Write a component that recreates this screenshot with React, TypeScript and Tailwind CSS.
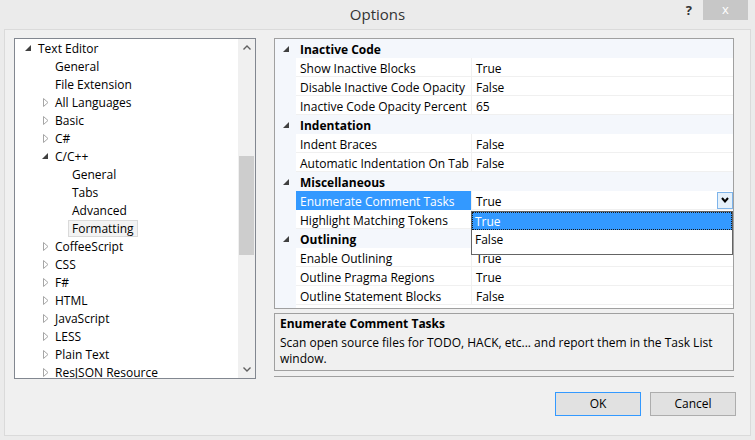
import React from 'react'

type TreeItem = {
  label: string
  level: 1 | 2 | 3
  arrow?: 'open' | 'closed'
  selected?: boolean
}

const tree: TreeItem[] = [
  { label: 'Text Editor', level: 1, arrow: 'open' },
  { label: 'General', level: 2 },
  { label: 'File Extension', level: 2 },
  { label: 'All Languages', level: 2, arrow: 'closed' },
  { label: 'Basic', level: 2, arrow: 'closed' },
  { label: 'C#', level: 2, arrow: 'closed' },
  { label: 'C/C++', level: 2, arrow: 'open' },
  { label: 'General', level: 3 },
  { label: 'Tabs', level: 3 },
  { label: 'Advanced', level: 3 },
  { label: 'Formatting', level: 3, selected: true },
  { label: 'CoffeeScript', level: 2, arrow: 'closed' },
  { label: 'CSS', level: 2, arrow: 'closed' },
  { label: 'F#', level: 2, arrow: 'closed' },
  { label: 'HTML', level: 2, arrow: 'closed' },
  { label: 'JavaScript', level: 2, arrow: 'closed' },
  { label: 'LESS', level: 2, arrow: 'closed' },
  { label: 'Plain Text', level: 2, arrow: 'closed' },
  { label: 'ResJSON Resource', level: 2, arrow: 'closed' },
]

const indent = { 1: 'pl-[7px]', 2: 'pl-[24px]', 3: 'pl-[41px]' }

type Row =
  | { kind: 'cat'; label: string }
  | { kind: 'prop'; name: string; value: string; selected?: boolean; hidden?: boolean }

const rows: Row[] = [
  { kind: 'cat', label: 'Inactive Code' },
  { kind: 'prop', name: 'Show Inactive Blocks', value: 'True' },
  { kind: 'prop', name: 'Disable Inactive Code Opacity', value: 'False' },
  { kind: 'prop', name: 'Inactive Code Opacity Percent', value: '65' },
  { kind: 'cat', label: 'Indentation' },
  { kind: 'prop', name: 'Indent Braces', value: 'False' },
  { kind: 'prop', name: 'Automatic Indentation On Tab', value: 'False' },
  { kind: 'cat', label: 'Miscellaneous' },
  { kind: 'prop', name: 'Enumerate Comment Tasks', value: 'True', selected: true },
  // value sits under the open dropdown list
  { kind: 'prop', name: 'Highlight Matching Tokens', value: '', hidden: true },
  { kind: 'cat', label: 'Outlining' },
  { kind: 'prop', name: 'Enable Outlining', value: 'True' },
  { kind: 'prop', name: 'Outline Pragma Regions', value: 'True' },
  { kind: 'prop', name: 'Outline Statement Blocks', value: 'False' },
]

function OpenArrow() {
  return (
    <svg width="6" height="6" viewBox="0 0 6 6" className="block">
      <polygon points="6,0 6,6 0,6" fill="#404040" />
    </svg>
  )
}

function ClosedArrow() {
  return (
    <svg width="6" height="9" viewBox="0 0 6 9" className="block">
      <polygon points="0.5,0.5 5,4.5 0.5,8.5" fill="none" stroke="#a6a6a6" strokeWidth="1" />
    </svg>
  )
}

function Chevron({ up, className }: { up?: boolean; className?: string }) {
  return (
    <svg width="8" height="5" viewBox="0 0 8 5" className={className}>
      <polyline
        points={up ? '0.5,4.5 4,1 7.5,4.5' : '0.5,0.5 4,4 7.5,0.5'}
        fill="none"
        stroke="#606060"
        strokeWidth="1.4"
      />
    </svg>
  )
}

function TreePanel() {
  return (
    <div className="flex w-[242px] h-[341px] border border-[#828790] bg-white">
      <div className="flex-1 overflow-hidden">
        {tree.map((item, i) => (
          <div key={i} className={`flex h-[18px] items-center pt-[2px] ${indent[item.level]}`}>
            <div className="-mt-[2px] flex w-[16px] items-center pl-[3px]">
              {item.arrow === 'open' && <OpenArrow />}
              {item.arrow === 'closed' && (
                <span className="pl-[1px]">
                  <ClosedArrow />
                </span>
              )}
            </div>
            {item.selected ? (
              <span className="-mt-[2px] -ml-[4px] flex h-[17px] items-center border border-[#dadada] bg-[#f3f3f3] px-[3px] pt-[2px] leading-none">
                {item.label}
              </span>
            ) : (
              <span className="leading-none">{item.label}</span>
            )}
          </div>
        ))}
      </div>
      <div className="flex w-[17px] flex-col bg-[#f0f0f0]">
        <div className="flex h-[17px] items-center justify-center">
          <Chevron up />
        </div>
        <div className="flex-1 pt-[100px] pb-[106px] px-[1px]">
          <div className="h-full bg-[#cdcdcd]" />
        </div>
        <div className="flex h-[17px] items-center justify-center">
          <Chevron />
        </div>
      </div>
    </div>
  )
}

function PropertyGrid() {
  return (
    <div className="relative flex h-[271px] flex-col border border-[#a0a0a0] bg-white">
      {rows.map((row, i) =>
        row.kind === 'cat' ? (
          <div key={i} className="flex h-[19px] items-center bg-[#f4f7fc]">
            <div className="flex w-[21px] items-center justify-center pl-[1px]">
              <OpenArrow />
            </div>
            <span className="pl-[4px] pt-[3px] font-bold">{row.label}</span>
          </div>
        ) : (
          <div key={i} className="flex h-[19px]">
            <div className="w-[21px] bg-[#f4f7fc]" />
            <div
              className={`flex w-[175px] items-center pl-[4px] pt-[3px] border-b ${
                row.selected ? 'bg-[#3399ff] text-white border-[#3399ff]' : 'border-[#f0f0f0]'
              }`}
            >
              {row.name}
            </div>
            <div className="w-px bg-[#f0f0f0]" />
            <div className="flex flex-1 items-center border-b border-[#f0f0f0] pl-[4px]">
              <span className="flex-1 pt-[3px]">{row.value}</span>
              {row.selected && (
                <div className="flex h-[17px] w-[16px] items-center justify-center border border-[#7eb4ea] bg-[#e5f1fb]">
                  <svg width="8" height="6" viewBox="0 0 8 6">
                    <polyline points="1,1 4,4.5 7,1" fill="none" stroke="#000" strokeWidth="2" />
                  </svg>
                </div>
              )}
            </div>
          </div>
        ),
      )}
      <div className="flex flex-1">
        <div className="w-[21px] bg-[#f4f7fc]" />
      </div>

      {/* open dropdown list */}
      <div className="absolute left-[196px] top-[172px] h-[44px] w-[262px] border border-[#646464] bg-white">
        <div className="flex h-[18px] items-center border border-dotted border-[#1a1a1a] bg-[#3399ff] pl-[2px] pt-[2px] text-white">
          True
        </div>
        <div className="flex h-[18px] items-center pl-[3px] pt-[2px]">False</div>
      </div>
    </div>
  )
}

export default function App() {
  return (
    <div
      className="flex h-[440px] w-[755px] flex-col bg-[#ebebeb] text-[12px] text-black"
      style={{ fontFamily: '"Segoe UI", "Open Sans", sans-serif' }}
    >
      <div className="grid h-[29px] grid-cols-[1fr_auto_1fr]">
        <div />
        <div className="pt-[3px] text-[15px] text-[#333]">Options</div>
        <div className="flex justify-end">
          <span className="pt-[1px] pr-[11px] text-[13px] font-bold text-[#333]">?</span>
          <div className="mr-[7px] flex h-[20px] w-[45px] items-center justify-center bg-[#c7c7c7] text-[13px] text-white">
            x
          </div>
        </div>
      </div>

      <div className="mx-[4px] flex h-[407px] flex-col border border-[#dadada] bg-[#f0f0f0] pl-[9px] pt-[8px]">
        <div className="flex gap-[18px]">
          <TreePanel />
          <div className="flex w-[460px] flex-col">
            <PropertyGrid />
            <div className="mt-[4px] h-[58px] border border-[#a0a0a0] pl-[5px] pt-[2px] leading-[16px]">
              <div className="font-bold">Enumerate Comment Tasks</div>
              <div className="mt-[3px]">
                Scan open source files for TODO, HACK, etc... and report them in the Task List
                <br />
                window.
              </div>
            </div>
            <div className="mt-[5px] h-px bg-[#a0a0a0]" />
            <div className="-mr-[2px] mt-[15px] flex justify-end gap-[9px]">
              <button className="h-[24px] w-[86px] border border-[#3399ff] bg-[#e1e1e1]">OK</button>
              <button className="h-[24px] w-[86px] border border-[#adadad] bg-[#e1e1e1]">Cancel</button>
            </div>
          </div>
        </div>
      </div>
    </div>
  )
}
